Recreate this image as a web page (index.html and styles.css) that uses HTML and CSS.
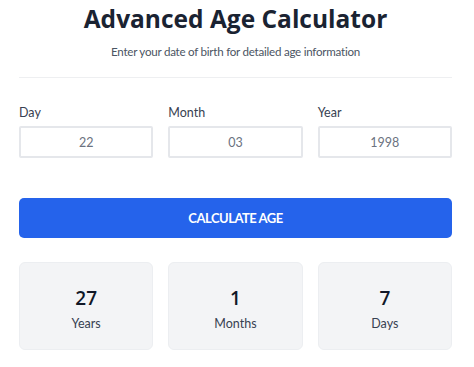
FILE: index.html
```html
<!DOCTYPE html>
<html lang="en">
<head>
  <meta charset="UTF-8" />
  <meta name="viewport" content="width=device-width, initial-scale=1.0"/>
  <title>Advanced Age Calculator</title>
  <link rel="stylesheet" href="styles.css">
</head>
<body>
  <div class="calculator">
    <header class="head">
      <h1>Advanced Age Calculator</h1>
      <p class="subtitle">Enter your date of birth for detailed age information</p>
    </header>

    <div class="fields">
      <div class="field">
        <label for="day">Day</label>
        <input id="day" type="text" value="22">
      </div>
      <div class="field">
        <label for="month">Month</label>
        <input id="month" type="text" value="03">
      </div>
      <div class="field">
        <label for="year">Year</label>
        <input id="year" type="text" value="1998">
      </div>
    </div>

    <button class="btn-calc">CALCULATE AGE</button>

    <div class="results">
      <div class="result">
        <div class="result-num">27</div>
        <div class="result-label">Years</div>
      </div>
      <div class="result">
        <div class="result-num">1</div>
        <div class="result-label">Months</div>
      </div>
      <div class="result">
        <div class="result-num">7</div>
        <div class="result-label">Days</div>
      </div>
    </div>
  </div>
</body>
</html>
```

FILE: styles.css
```css
* {
  margin: 0;
  padding: 0;
  box-sizing: border-box;
  font-family: 'Lato', sans-serif;
}

body {
  background: #fff;
  color: #1f2937;
}

.calculator {
  width: 433px;
  margin-left: 19px;
}

.head {
  text-align: center;
  padding-bottom: 15px;
  border-bottom: 1px solid #eeeff1;
}

.head h1 {
  font-family: 'Open Sans', sans-serif;
  font-size: 24.5px;
  font-weight: 700;
  line-height: 38px;
  color: #1a2332;
}

.subtitle {
  margin-top: 4px;
  font-size: 11.6px;
  letter-spacing: -0.25px;
  line-height: 20px;
  color: #4b5563;
}

.fields {
  display: grid;
  grid-template-columns: repeat(3, 1fr);
  gap: 15px;
  margin-top: 26px;
}

.field label {
  display: block;
  font-size: 12.5px;
  line-height: 18px;
  color: #374151;
  margin-bottom: 4px;
}

.field input {
  width: 100%;
  height: 32px;
  border: 2px solid #e5e7eb;
  border-radius: 2px;
  text-align: center;
  font-size: 12.5px;
  color: #6b7280;
  background: #fff;
}

.btn-calc {
  display: block;
  width: 100%;
  height: 40px;
  margin-top: 40px;
  background: #2563eb;
  color: #fff;
  border: none;
  border-radius: 5px;
  font-size: 13px;
  letter-spacing: -0.5px;
  font-weight: 700;
  cursor: pointer;
}

.results {
  display: grid;
  grid-template-columns: repeat(3, 1fr);
  gap: 15px;
  margin-top: 24px;
}

.result {
  height: 88px;
  background: #f3f4f6;
  border: 1px solid #eceef1;
  border-radius: 6px;
  display: flex;
  flex-direction: column;
  align-items: center;
  justify-content: center;
  padding-top: 6px;
}

.result-num {
  font-family: 'Open Sans', sans-serif;
  font-size: 19px;
  font-weight: 600;
  line-height: 24px;
  color: #111827;
}

.result-label {
  margin-top: 6px;
  font-size: 12.5px;
  line-height: 16px;
  color: #374151;
}
```
